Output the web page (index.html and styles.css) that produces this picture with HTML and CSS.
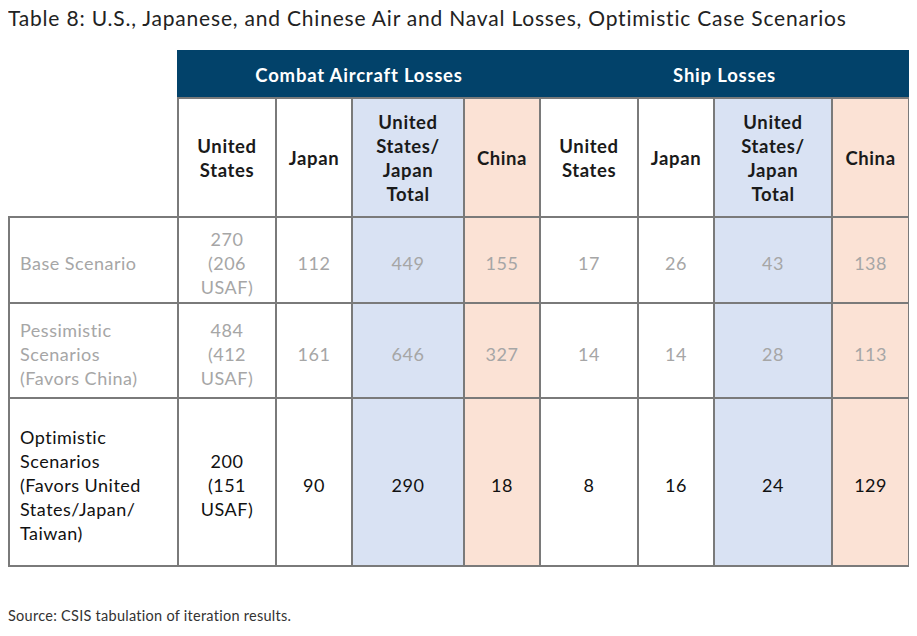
FILE: index.html
```html
<!DOCTYPE html>
<html lang="en">
<head>
<meta charset="utf-8">
<title>Table 8</title>
<link rel="stylesheet" href="styles.css">
</head>
<body>
<h1 class="title">Table 8: U.S., Japanese, and Chinese Air and Naval Losses, Optimistic Case Scenarios</h1>
<table class="losses">
  <colgroup>
    <col class="c-label"><col class="c-us"><col class="c-jp"><col class="c-tot"><col class="c-cn">
    <col class="c-us"><col class="c-jp"><col class="c-tot2"><col class="c-cn2">
  </colgroup>
  <thead>
    <tr class="r-group">
      <th class="blank"></th>
      <th class="group" colspan="4">Combat Aircraft Losses</th>
      <th class="group group-2" colspan="4">Ship Losses</th>
    </tr>
    <tr class="r-sub">
      <th class="blank"></th>
      <th>United<br>States</th>
      <th>Japan</th>
      <th class="blue">United<br>States/<br>Japan<br>Total</th>
      <th class="peach">China</th>
      <th>United<br>States</th>
      <th>Japan</th>
      <th class="blue">United<br>States/<br>Japan<br>Total</th>
      <th class="peach">China</th>
    </tr>
  </thead>
  <tbody>
    <tr class="r-base muted">
      <td class="label">Base Scenario</td>
      <td>270<br>(206<br>USAF)</td>
      <td>112</td>
      <td class="blue">449</td>
      <td class="peach">155</td>
      <td>17</td>
      <td>26</td>
      <td class="blue">43</td>
      <td class="peach">138</td>
    </tr>
    <tr class="r-pess muted">
      <td class="label">Pessimistic<br>Scenarios<br>(Favors China)</td>
      <td>484<br>(412<br>USAF)</td>
      <td>161</td>
      <td class="blue">646</td>
      <td class="peach">327</td>
      <td>14</td>
      <td>14</td>
      <td class="blue">28</td>
      <td class="peach">113</td>
    </tr>
    <tr class="r-opt">
      <td class="label">Optimistic<br>Scenarios<br>(Favors United<br>States/Japan/<br>Taiwan)</td>
      <td>200<br>(151<br>USAF)</td>
      <td>90</td>
      <td class="blue">290</td>
      <td class="peach">18</td>
      <td>8</td>
      <td>16</td>
      <td class="blue">24</td>
      <td class="peach">129</td>
    </tr>
  </tbody>
</table>
<p class="source">Source: CSIS tabulation of iteration results.</p>
</body>
</html>
```

FILE: styles.css
```css
html, body {
  background: #ffffff;
}
body {
  margin: 8px;
  font-family: "Lato", "Open Sans", sans-serif;
  color: #1a1a1a;
}
.title {
  margin: 0;
  font-size: 21px;
  line-height: 20px;
  font-weight: 400;
  color: #222222;
  letter-spacing: 0.8px;
}
.losses {
  margin-top: 22px;
  border-collapse: collapse;
  table-layout: fixed;
  width: 900px;
  font-size: 18px;
  line-height: 24px;
}
.c-label { width: 169px; }
.c-us { width: 98px; }
.c-jp { width: 76px; }
.c-tot { width: 112px; }
.c-cn { width: 76px; }
.c-tot2 { width: 118px; }
.c-cn2 { width: 77px; }

.losses th,
.losses td {
  border: 2px solid #7a7a7a;
  text-align: center;
  vertical-align: middle;
  padding: 0 2px;
}
.losses td {
  padding-top: 6px;
  letter-spacing: 0.5px;
}
.losses th {
  font-weight: 700;
  color: #1a1a1a;
  font-size: 18.5px;
  letter-spacing: 0.6px;
}
.losses th.blank {
  border: none;
  background: #ffffff;
}
.r-group { height: 47px; }
.r-sub { height: 119px; }
.r-base { height: 86px; }
.r-pess { height: 95px; }
.r-opt { height: 168px; }

.losses th.group {
  background: #02426a;
  color: #ffffff;
  border-color: #02426a;
  border-bottom-color: #7a7a7a;
  letter-spacing: 0.8px;
}
.losses th.group-2 {
  border-left: 2px solid #e6e9ee;
}
.blue { background: #d9e2f3; }
.peach { background: #fbe2d5; }

.losses td.label {
  text-align: left;
  padding-left: 10px;
}
.muted td {
  color: #a6a6a6;
}
.r-opt td {
  color: #111111;
}
.source {
  margin: 40px 0 0;
  font-size: 14.5px;
  line-height: 18px;
  color: #333333;
  letter-spacing: 0.27px;
}
```
